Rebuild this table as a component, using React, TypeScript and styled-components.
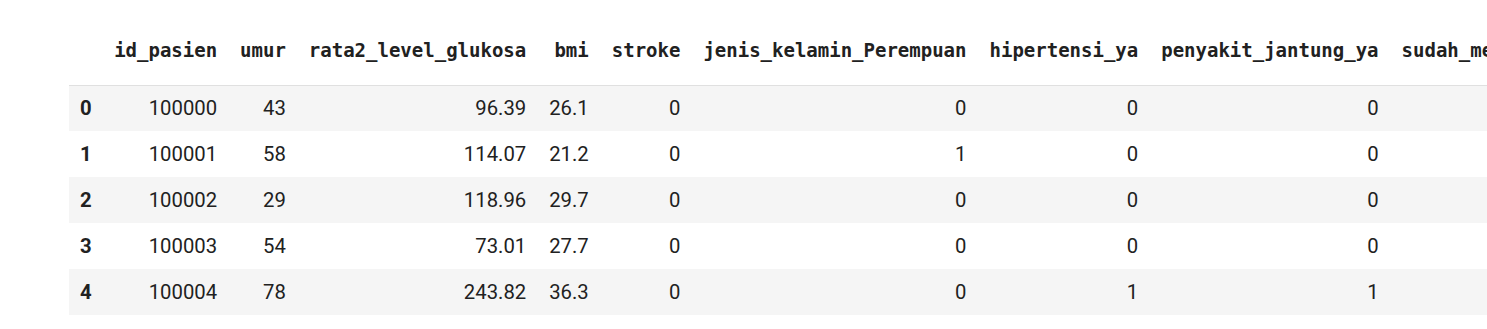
import React from 'react';
import styled, { createGlobalStyle } from 'styled-components';

const GlobalStyle = createGlobalStyle`
  html, body {
    margin: 0;
    padding: 0;
    background: #ffffff;
    overflow: hidden;
  }
`;

const Page = styled.div`
  width: 1487px;
  height: 329px;
  overflow: hidden;
  padding: 15px 0 0 69px;
  box-sizing: border-box;
  background: #ffffff;
`;

const Table = styled.table`
  border-collapse: collapse;
  border-spacing: 0;
  white-space: nowrap;
  font-family: Roboto, "Noto Sans", sans-serif;
  font-size: 20.3px;
  color: #212121;
`;

const HeadRow = styled.tr`
  height: 70px;
  border-bottom: 1px solid #e0e0e0;
`;

const Th = styled.th`
  font-family: "DejaVu Sans Mono", "Liberation Mono", monospace;
  font-weight: 700;
  font-size: 19px;
  text-align: right;
  padding: 0 11.5px;
  vertical-align: middle;
  color: #212121;
`;

const Row = styled.tr<{ $striped: boolean }>`
  height: 46px;
  background: ${p => (p.$striped ? '#f5f5f5' : '#ffffff')};
`;

const IndexCell = styled.th`
  font-family: Roboto, "Noto Sans", sans-serif;
  font-weight: 700;
  font-size: 20.3px;
  text-align: left;
  padding: 0 11px;
  vertical-align: middle;
`;

const Td = styled.td`
  text-align: right;
  padding: 0 11.5px;
  vertical-align: middle;
`;

const columns = [
  'id_pasien',
  'umur',
  'rata2_level_glukosa',
  'bmi',
  'stroke',
  'jenis_kelamin_Perempuan',
  'hipertensi_ya',
  'penyakit_jantung_ya',
  'sudah_menikah_ya',
  'jenis_pekerjaan_Swasta',
];

const rows: (string | number)[][] = [
  [100000, 43, '96.39', '26.1', 0, 0, 0, 0, 1, 1],
  [100001, 58, '114.07', '21.2', 0, 1, 0, 0, 1, 1],
  [100002, 29, '118.96', '29.7', 0, 0, 0, 0, 0, 1],
  [100003, 54, '73.01', '27.7', 0, 0, 0, 0, 1, 0],
  [100004, 78, '243.82', '36.3', 0, 0, 1, 1, 1, 0],
];

export default function App() {
  return (
    <Page>
      <GlobalStyle />
      <Table>
        <thead>
          <HeadRow>
            <Th />
            {columns.map(c => (
              <Th key={c}>{c}</Th>
            ))}
          </HeadRow>
        </thead>
        <tbody>
          {rows.map((r, i) => (
            <Row key={i} $striped={i % 2 === 0}>
              <IndexCell>{i}</IndexCell>
              {r.map((v, j) => (
                <Td key={j}>{v}</Td>
              ))}
            </Row>
          ))}
        </tbody>
      </Table>
    </Page>
  );
}
